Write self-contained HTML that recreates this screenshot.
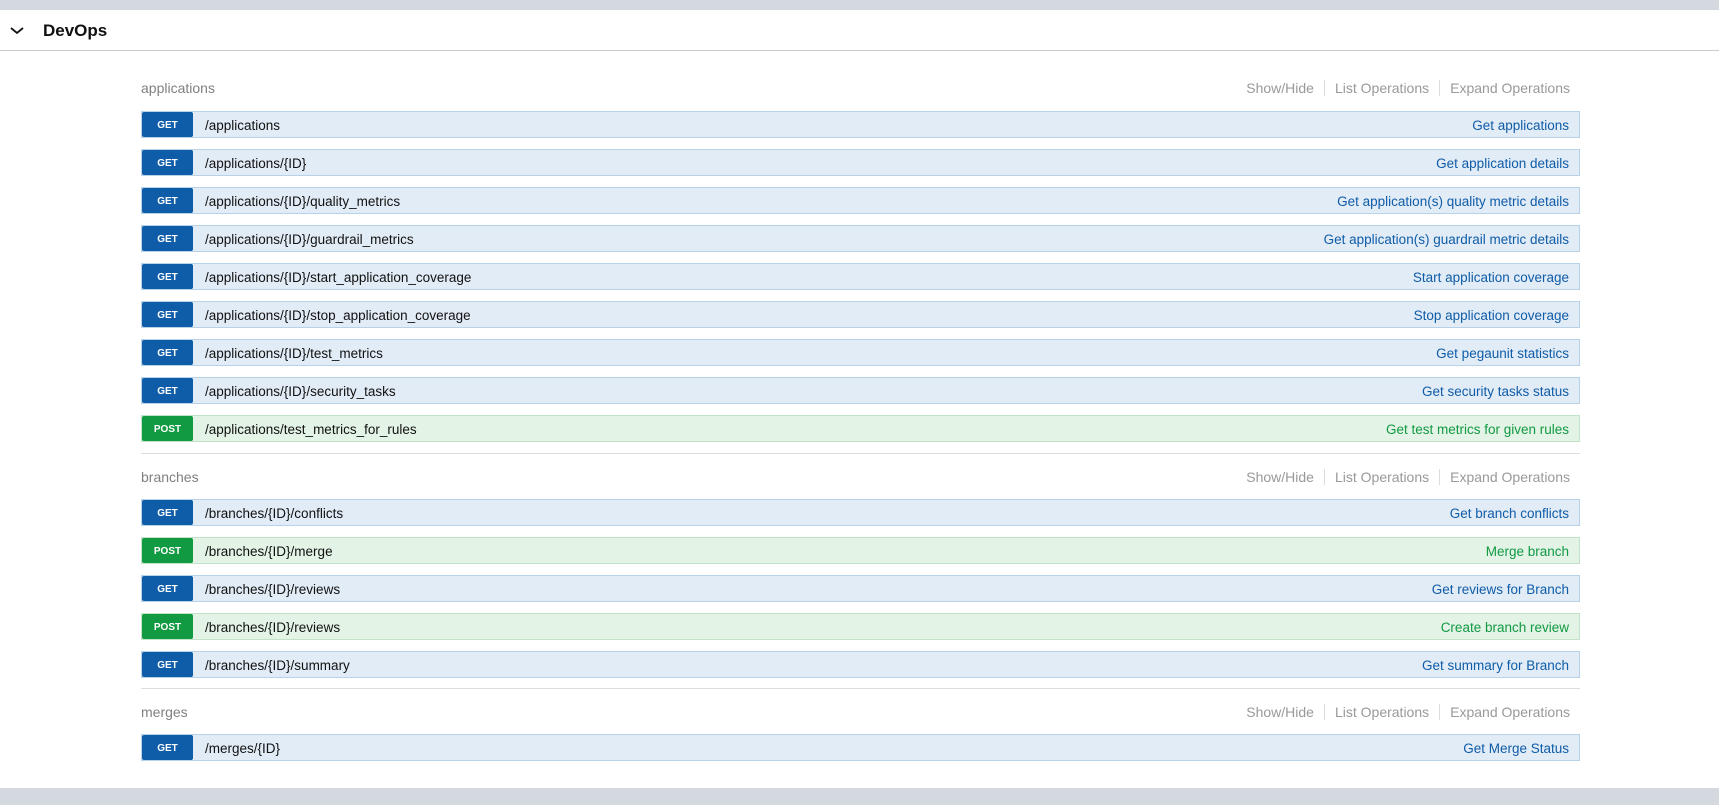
<!DOCTYPE html>
<html><head><meta charset="utf-8"><style>
*{box-sizing:border-box;margin:0;padding:0}
body{width:1719px;height:805px;background:#fff;font-family:"Liberation Sans",sans-serif;position:relative;overflow:hidden}
.topbar{position:absolute;left:0;top:0;width:1719px;height:10px;background:#d4d8df}
.botbar{position:absolute;left:0;top:788px;width:1719px;height:17px;background:#d4d8df}
.hdr{position:absolute;left:0;top:10px;width:1719px;height:41px;border-bottom:1px solid #c9cdd3}
.hdr .t{position:absolute;left:43px;top:11px;font-size:17px;font-weight:bold;color:#111}
.hdr svg{position:absolute;left:9px;top:16px}
.lbl{position:absolute;left:141px;font-size:14px;color:#808080}
.acts{position:absolute;right:149px;font-size:14px;color:#999}
.acts span{padding:0 10px;border-left:1px solid #ddd}
.acts span:first-child{border-left:none}
.acts span:last-child{padding-right:0}
.div{position:absolute;left:141px;width:1439px;height:1px;background:#ddd}
.row{position:absolute;left:141px;width:1439px;height:27px;border:1px solid #b8d2ea;background:#e2ecf6}
.row.p{border-color:#c3e3c9;background:#e3f3e6}
.b{position:absolute;left:0;top:0;width:51px;height:25px;background:#0f5ca8;color:#fff;font-size:10px;font-weight:bold;text-align:center;line-height:28px;border-radius:2px}
.p .b{background:#119a42}
.pa{position:absolute;left:63px;top:6px;font-size:13.5px;color:#111}
.d{position:absolute;right:10px;top:6px;font-size:13.5px;color:#0f5ca8}
.p .d{color:#119a42}
</style></head><body>
<div class="topbar"></div>
<div class="hdr"><svg width="16" height="10" viewBox="0 0 16 10"><path d="M2 2 L8 7 L14 2" stroke="#111" stroke-width="1.8" fill="none"/></svg><div class="t">DevOps</div></div>

<div class="lbl" style="top:80px">applications</div>
<div class="acts" style="top:80px"><span>Show/Hide</span><span>List Operations</span><span>Expand Operations</span></div>
<div class="row" style="top:111px"><div class="b">GET</div><div class="pa">/applications</div><div class="d">Get applications</div></div>
<div class="row" style="top:149px"><div class="b">GET</div><div class="pa">/applications/{ID}</div><div class="d">Get application details</div></div>
<div class="row" style="top:187px"><div class="b">GET</div><div class="pa">/applications/{ID}/quality_metrics</div><div class="d">Get application(s) quality metric details</div></div>
<div class="row" style="top:225px"><div class="b">GET</div><div class="pa">/applications/{ID}/guardrail_metrics</div><div class="d">Get application(s) guardrail metric details</div></div>
<div class="row" style="top:263px"><div class="b">GET</div><div class="pa">/applications/{ID}/start_application_coverage</div><div class="d">Start application coverage</div></div>
<div class="row" style="top:301px"><div class="b">GET</div><div class="pa">/applications/{ID}/stop_application_coverage</div><div class="d">Stop application coverage</div></div>
<div class="row" style="top:339px"><div class="b">GET</div><div class="pa">/applications/{ID}/test_metrics</div><div class="d">Get pegaunit statistics</div></div>
<div class="row" style="top:377px"><div class="b">GET</div><div class="pa">/applications/{ID}/security_tasks</div><div class="d">Get security tasks status</div></div>
<div class="row p" style="top:415px"><div class="b">POST</div><div class="pa">/applications/test_metrics_for_rules</div><div class="d">Get test metrics for given rules</div></div>
<div class="div" style="top:453px"></div>

<div class="lbl" style="top:469px">branches</div>
<div class="acts" style="top:469px"><span>Show/Hide</span><span>List Operations</span><span>Expand Operations</span></div>
<div class="row" style="top:499px"><div class="b">GET</div><div class="pa">/branches/{ID}/conflicts</div><div class="d">Get branch conflicts</div></div>
<div class="row p" style="top:537px"><div class="b">POST</div><div class="pa">/branches/{ID}/merge</div><div class="d">Merge branch</div></div>
<div class="row" style="top:575px"><div class="b">GET</div><div class="pa">/branches/{ID}/reviews</div><div class="d">Get reviews for Branch</div></div>
<div class="row p" style="top:613px"><div class="b">POST</div><div class="pa">/branches/{ID}/reviews</div><div class="d">Create branch review</div></div>
<div class="row" style="top:651px"><div class="b">GET</div><div class="pa">/branches/{ID}/summary</div><div class="d">Get summary for Branch</div></div>
<div class="div" style="top:688px"></div>

<div class="lbl" style="top:704px">merges</div>
<div class="acts" style="top:704px"><span>Show/Hide</span><span>List Operations</span><span>Expand Operations</span></div>
<div class="row" style="top:734px"><div class="b">GET</div><div class="pa">/merges/{ID}</div><div class="d">Get Merge Status</div></div>

<div class="botbar"></div>
</body></html>
